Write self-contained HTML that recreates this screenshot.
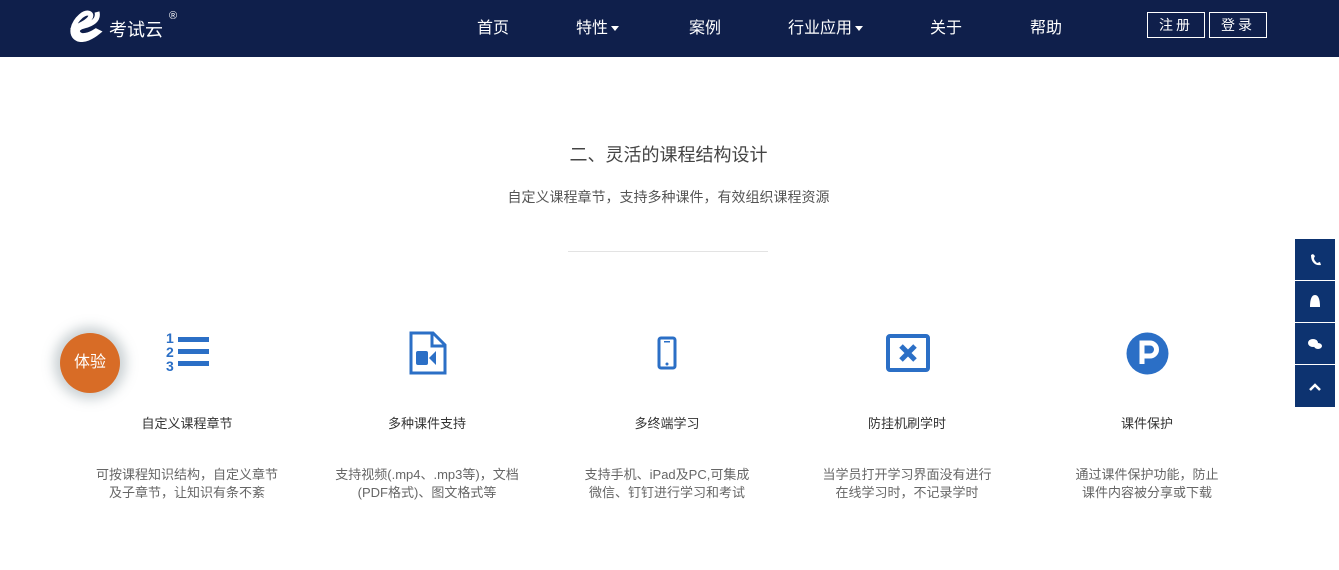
<!DOCTYPE html><html><head><meta charset="utf-8"><style>
body{margin:0;width:1339px;height:570px;background:#fff;font-family:"Liberation Sans","Noto Sans CJK SC",sans-serif;position:relative;overflow:hidden}
.nav{position:absolute;left:0;top:0;width:1339px;height:57px;background:#0f1f4b}
.nav a{position:absolute;top:14px;color:#fff;font-size:16px;white-space:nowrap}
.car{display:inline-block;border-left:4px solid transparent;border-right:4px solid transparent;border-top:5px solid #fff;vertical-align:middle;margin-left:3px}
.btn{position:absolute;top:12px;height:24px;border:1px solid #fff;color:#fff;font-size:14px;line-height:24px;text-align:center;letter-spacing:3px}
.abs{position:absolute}
.col{position:absolute;top:410px;width:240px;text-align:center}
.col .t{font-size:13px;color:#333;line-height:28px}
.col .d{font-size:13px;color:#666;line-height:18px;margin-top:28px}
.side{position:absolute;left:1295px;width:40px;height:41px;background:#0d3370}
</style></head><body>
<div class="nav">
<svg class="abs" style="left:66px;top:8px" width="42" height="34" viewBox="0 0 42 34"><path d="M6 22C10 18 20 16 24 10C27 5 21 3 15 8C7 15 3 27 12 31C18 33 26 29 32 24L30 23C24 27 15 30 12 25C10 22 13 19 18 18C26 16 33 12 31 4" fill="none" stroke="#fff" stroke-width="5"/></svg>
<div class="abs" style="left:109px;top:16px;color:#fff;font-size:18px">考试云</div>
<div class="abs" style="left:169px;top:10px;color:#fff;font-size:11px">®</div>
<a style="left:477px">首页</a><a style="left:576px">特性<span class="car"></span></a><a style="left:689px">案例</a><a style="left:788px">行业应用<span class="car"></span></a><a style="left:930px">关于</a><a style="left:1030px">帮助</a>
<div class="btn" style="left:1147px;width:56px">注册</div><div class="btn" style="left:1209px;width:56px">登录</div>
</div>
<div class="abs" style="left:0;width:1337px;top:141px;text-align:center;font-size:18px;color:#444">二、灵活的课程结构设计</div>
<div class="abs" style="left:0;width:1337px;top:187px;text-align:center;font-size:14px;color:#555">自定义课程章节，支持多种课件，有效组织课程资源</div>
<div class="abs" style="left:568px;top:251px;width:200px;height:1px;background:#e3e3e3"></div>
<div class="abs" style="left:60px;top:333px;width:60px;height:60px;border-radius:50%;background:#d86c26;box-shadow:0 0 12px 6px rgba(100,120,130,.35);color:#fff;font-size:16px;line-height:60px;text-align:center">体验</div>
<svg class="abs" style="left:166px;top:331px" width="44" height="44" viewBox="0 0 44 44"><g fill="#2b6fc6"><rect x="12" y="6" width="31" height="5"/><rect x="12" y="18" width="31" height="5"/><rect x="12" y="30" width="31" height="5"/></g><g fill="#2b6fc6" font-size="14" font-weight="bold" font-family="Liberation Sans"><text x="0" y="12">1</text><text x="0" y="26">2</text><text x="0" y="40">3</text></g></svg>
<svg class="abs" style="left:408px;top:331px" width="40" height="44" viewBox="0 0 40 44"><path d="M3 2H25L37 14V42H3Z" fill="none" stroke="#2b6fc6" stroke-width="3"/><path d="M24 2V15H37" fill="none" stroke="#2b6fc6" stroke-width="3"/><rect x="8" y="20" width="12" height="14" rx="2" fill="#2b6fc6"/><path d="M21 27L28 20V34Z" fill="#2b6fc6"/></svg>
<svg class="abs" style="left:657px;top:336px" width="20" height="34" viewBox="0 0 20 34"><rect x="2" y="2" width="16" height="30" rx="2" fill="none" stroke="#2b6fc6" stroke-width="3"/><rect x="7" y="5" width="6" height="1.5" fill="#2b6fc6"/><circle cx="10" cy="28" r="1.5" fill="#2b6fc6"/></svg>
<svg class="abs" style="left:886px;top:334px" width="44" height="38" viewBox="0 0 44 38"><rect x="2" y="2" width="40" height="34" rx="2" fill="none" stroke="#2b6fc6" stroke-width="4"/><path d="M15 12L29 26M29 12L15 26" stroke="#2b6fc6" stroke-width="5"/></svg>
<svg class="abs" style="left:1126px;top:332px" width="43" height="43" viewBox="0 0 43 43"><circle cx="21.5" cy="21.5" r="21" fill="#2b6fc6"/><path d="M16 32V11H24A6 6 0 0 1 24 24H16" fill="none" stroke="#fff" stroke-width="5"/></svg>
<div class="col" style="left:67px"><div class="t">自定义课程章节</div><div class="d">可按课程知识结构，自定义章节<br>及子章节，让知识有条不紊</div></div>
<div class="col" style="left:307px"><div class="t">多种课件支持</div><div class="d">支持视频(.mp4、.mp3等)，文档<br>(PDF格式)、图文格式等</div></div>
<div class="col" style="left:547px"><div class="t">多终端学习</div><div class="d">支持手机、iPad及PC,可集成<br>微信、钉钉进行学习和考试</div></div>
<div class="col" style="left:787px"><div class="t">防挂机刷学时</div><div class="d">当学员打开学习界面没有进行<br>在线学习时，不记录学时</div></div>
<div class="col" style="left:1027px"><div class="t">课件保护</div><div class="d">通过课件保护功能，防止<br>课件内容被分享或下载</div></div>
<div class="side" style="top:239px"><svg width="40" height="41"><path d="M16 16C16 23 20 27 26 26L25 23L22 24C20 22 19 21 19 19L20 17L18 15Z" fill="#fff"/></svg></div>
<div class="side" style="top:281px"><svg width="40" height="41"><path d="M15 26C15 20 16 14 20 14C24 14 25 20 25 26Z" fill="#fff"/></svg></div>
<div class="side" style="top:323px"><svg width="40" height="41"><ellipse cx="18" cy="20" rx="5" ry="4" fill="#fff"/><ellipse cx="23" cy="23" rx="4" ry="3" fill="#fff"/></svg></div>
<div class="side" style="top:365px;height:42px"><svg width="40" height="42"><path d="M15 25L20 20L25 25" fill="none" stroke="#fff" stroke-width="2.5"/></svg></div>
</body></html>
